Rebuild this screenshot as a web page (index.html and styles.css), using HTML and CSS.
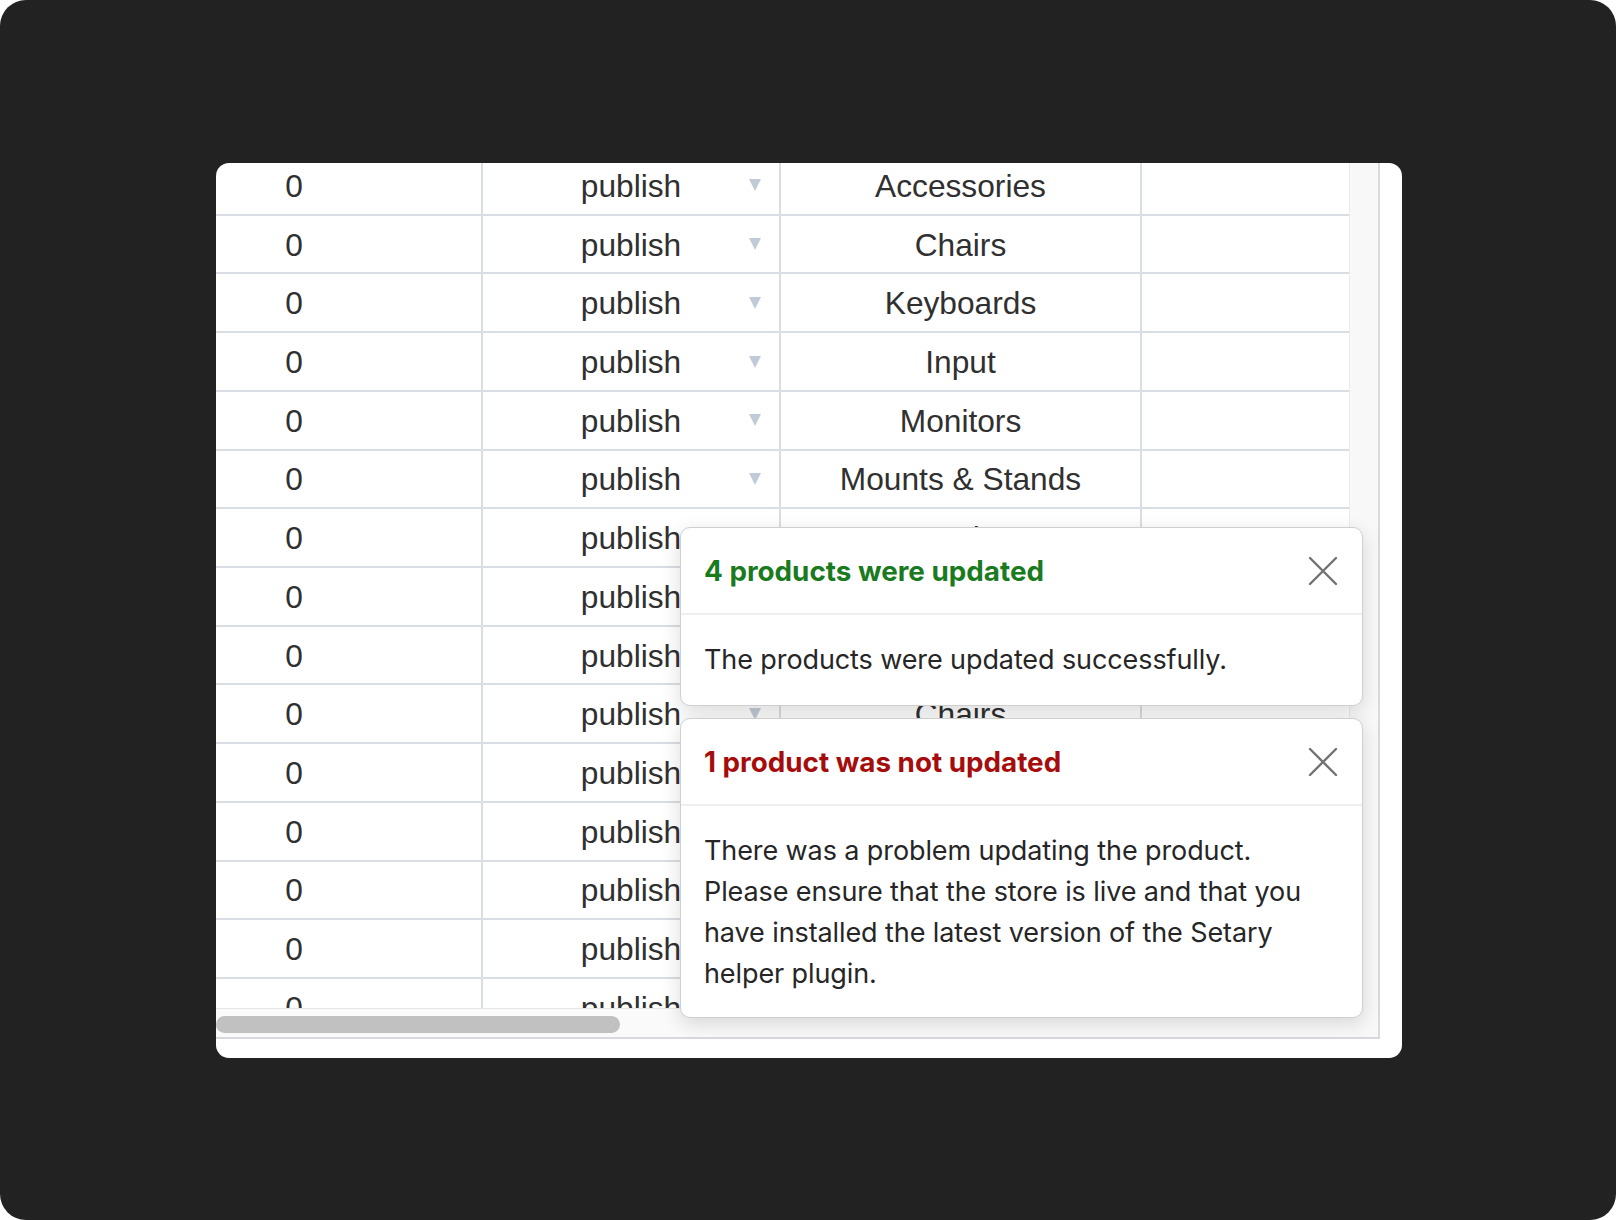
FILE: index.html
```html
<!DOCTYPE html>
<html lang="en">
<head>
<meta charset="utf-8">
<title>Bulk update</title>
<link rel="stylesheet" href="styles.css">
</head>
<body>
<div class="frame">
  <div class="card">
    <div class="grid-shell">
      <div class="table-view">
        <div class="table">
          <div class="row"><div class="cell">0</div><div class="cell status">publish<span class="caret"></span></div><div class="cell">Accessories</div><div class="cell"></div></div>
          <div class="row"><div class="cell">0</div><div class="cell status">publish<span class="caret"></span></div><div class="cell">Chairs</div><div class="cell"></div></div>
          <div class="row"><div class="cell">0</div><div class="cell status">publish<span class="caret"></span></div><div class="cell">Keyboards</div><div class="cell"></div></div>
          <div class="row"><div class="cell">0</div><div class="cell status">publish<span class="caret"></span></div><div class="cell">Input</div><div class="cell"></div></div>
          <div class="row"><div class="cell">0</div><div class="cell status">publish<span class="caret"></span></div><div class="cell">Monitors</div><div class="cell"></div></div>
          <div class="row"><div class="cell">0</div><div class="cell status">publish<span class="caret"></span></div><div class="cell">Mounts &amp; Stands</div><div class="cell"></div></div>
          <div class="row"><div class="cell">0</div><div class="cell status">publish<span class="caret"></span></div><div class="cell">Desks</div><div class="cell"></div></div>
          <div class="row"><div class="cell">0</div><div class="cell status">publish<span class="caret"></span></div><div class="cell">Lighting</div><div class="cell"></div></div>
          <div class="row"><div class="cell">0</div><div class="cell status">publish<span class="caret"></span></div><div class="cell">Accessories</div><div class="cell"></div></div>
          <div class="row"><div class="cell">0</div><div class="cell status">publish<span class="caret"></span></div><div class="cell">Chairs</div><div class="cell"></div></div>
          <div class="row"><div class="cell">0</div><div class="cell status">publish<span class="caret"></span></div><div class="cell">Keyboards</div><div class="cell"></div></div>
          <div class="row"><div class="cell">0</div><div class="cell status">publish<span class="caret"></span></div><div class="cell">Input</div><div class="cell"></div></div>
          <div class="row"><div class="cell">0</div><div class="cell status">publish<span class="caret"></span></div><div class="cell">Monitors</div><div class="cell"></div></div>
          <div class="row"><div class="cell">0</div><div class="cell status">publish<span class="caret"></span></div><div class="cell">Mounts &amp; Stands</div><div class="cell"></div></div>
          <div class="row"><div class="cell">0</div><div class="cell status">publish<span class="caret"></span></div><div class="cell">Accessories</div><div class="cell"></div></div>
        </div>
      </div>
      <div class="vscroll"></div>
      <div class="hscroll"><div class="thumb"></div></div>
      <div class="corner"></div>
    </div>

    <div class="toasts">
      <div class="toast">
        <div class="toast-head">
          <span class="toast-title success">4 products were updated</span>
          <svg class="close" viewBox="0 0 30 30" width="30" height="30" aria-hidden="true"><path d="M2 2 L28 28 M28 2 L2 28" /></svg>
        </div>
        <div class="toast-body">The products were updated successfully.</div>
      </div>
      <div class="toast">
        <div class="toast-head">
          <span class="toast-title error">1 product was not updated</span>
          <svg class="close" viewBox="0 0 30 30" width="30" height="30" aria-hidden="true"><path d="M2 2 L28 28 M28 2 L2 28" /></svg>
        </div>
        <div class="toast-body">There was a problem updating the product. Please ensure that the store is live and that you have installed the latest version of the Setary helper plugin.</div>
      </div>
    </div>
  </div>
</div>
</body>
</html>
```

FILE: styles.css
```css
* { box-sizing: border-box; }

html, body {
  margin: 0;
  padding: 0;
  background: #ffffff;
}

.frame {
  width: 1616px;
  height: 1220px;
  background: #222222;
  border-radius: 26px;
  padding: 163px 0 0 216px;
  overflow: hidden;
}

.card {
  position: relative;
  width: 1186px;
  height: 895px;
  background: #ffffff;
  border-radius: 13px;
  overflow: hidden;
}

.grid-shell {
  display: grid;
  grid-template-columns: 1133px 29px;
  grid-template-rows: 845px 29px;
  width: 1164px;
  height: 876px;
  border-right: 2px solid #d6dadf;
  border-bottom: 2px solid #d6dadf;
}

.table-view {
  overflow: hidden;
}

.table {
  margin-top: -6px;
  margin-left: -109px;
  font-family: "Liberation Sans", Arial, sans-serif;
  font-size: 31.7px;
  color: #303030;
}

.row {
  display: grid;
  grid-template-columns: 376px 298px 361px 207px;
  height: 58.73px;
  border-bottom: 2px solid #d9dee4;
}

.cell {
  display: flex;
  align-items: center;
  justify-content: center;
  padding-top: 2px;
  border-right: 2px solid #d9dee4;
  white-space: nowrap;
  overflow: hidden;
}

.cell:last-child {
  border-right: none;
}

.status {
  position: relative;
}

.caret {
  position: absolute;
  right: 18px;
  top: 50%;
  margin-top: -6px;
  width: 0;
  height: 0;
  border-left: 6.5px solid transparent;
  border-right: 6.5px solid transparent;
  border-top: 12px solid #c1cbd7;
}

.vscroll {
  background: #f8f8f8;
  border-left: 1px solid #ececec;
}

.hscroll {
  background: #fafafa;
  border-top: 1px solid #e6e6e6;
  padding: 7px 0 0 0;
}

.thumb {
  width: 404px;
  height: 17px;
  background: #c1c1c1;
  border-radius: 9px;
}

.corner {
  background: #f8f8f8;
}

/* Toasts */
.toasts {
  position: absolute;
  left: 464px;
  top: 364px;
  width: 683px;
  display: flex;
  flex-direction: column;
  gap: 12px;
  font-family: Inter, "Open Sans", sans-serif;
}

.toast {
  background: #ffffff;
  border: 1.5px solid #cfcfcf;
  border-radius: 10px;
  box-shadow: 0 6px 20px rgba(0, 0, 0, 0.14);
}

.toast-head {
  height: 87px;
  display: flex;
  align-items: center;
  justify-content: space-between;
  padding: 0 24px 0 23px;
  border-bottom: 2px solid #efefef;
}

.toast-title {
  font-size: 27.8px;
  font-weight: 700;
}

.toast-title.success { color: #1a7a1e; }
.toast-title.error { color: #a50d0d; }

.close {
  width: 30px;
  height: 30px;
  fill: none;
  stroke: #727272;
  stroke-width: 2.4;
  stroke-linecap: round;
}

.toast-body {
  padding: 24px 44px 25px 23px;
  font-size: 27px;
  line-height: 41px;
  color: #262626;
  letter-spacing: -0.1px;
}

.toast + .toast .toast-body {
  padding-bottom: 23px;
}
```
